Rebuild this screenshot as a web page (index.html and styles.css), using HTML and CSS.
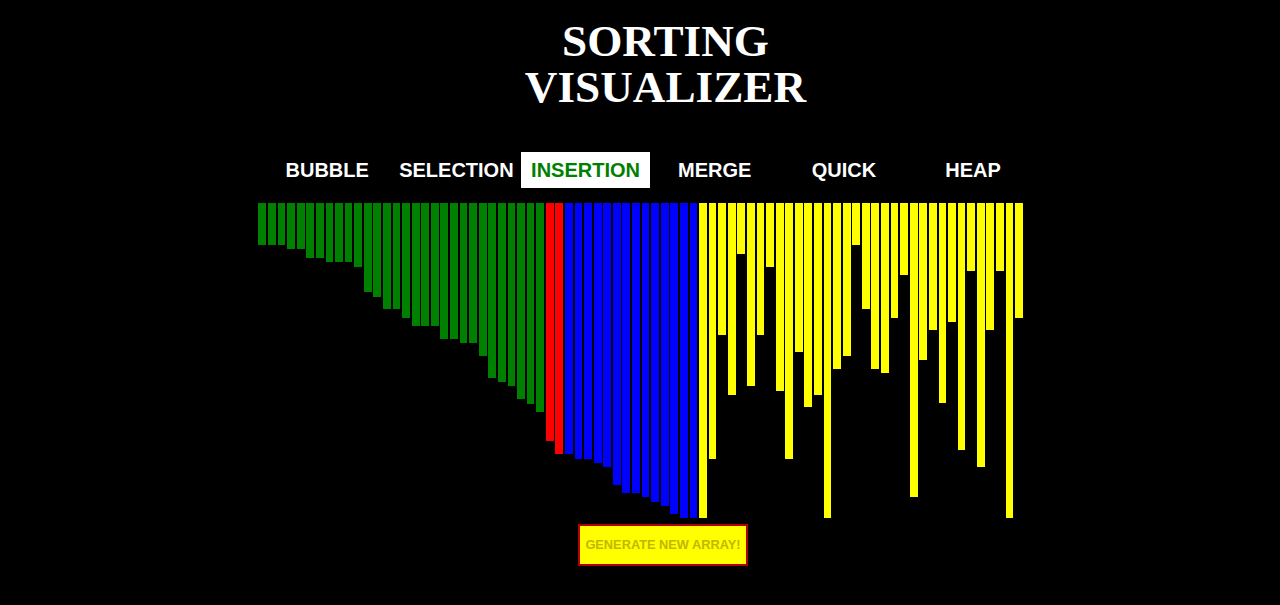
FILE: index.html
```html
<!DOCTYPE html>
<html lang="en">
<head>
<meta charset="utf-8">
<title>Sorting Visualizer</title>
<link rel="stylesheet" href="styles.css">
</head>
<body>
<div class="app">
  <h1 class="title">SORTING<br>VISUALIZER</h1>
  <nav class="algos">
    <div class="algo">BUBBLE</div>
    <div class="algo">SELECTION</div>
    <div class="algo active">INSERTION</div>
    <div class="algo">MERGE</div>
    <div class="algo">QUICK</div>
    <div class="algo">HEAP</div>
  </nav>
  <div class="bars">
    <div class="bar sorted" style="height:42px"></div>
    <div class="bar sorted" style="height:42px"></div>
    <div class="bar sorted" style="height:42px"></div>
    <div class="bar sorted" style="height:46px"></div>
    <div class="bar sorted" style="height:46px"></div>
    <div class="bar sorted" style="height:54.7px"></div>
    <div class="bar sorted" style="height:54.7px"></div>
    <div class="bar sorted" style="height:58.7px"></div>
    <div class="bar sorted" style="height:58.7px"></div>
    <div class="bar sorted" style="height:58.7px"></div>
    <div class="bar sorted" style="height:63.7px"></div>
    <div class="bar sorted" style="height:88.7px"></div>
    <div class="bar sorted" style="height:93.7px"></div>
    <div class="bar sorted" style="height:106.3px"></div>
    <div class="bar sorted" style="height:106.3px"></div>
    <div class="bar sorted" style="height:114.6px"></div>
    <div class="bar sorted" style="height:123px"></div>
    <div class="bar sorted" style="height:123px"></div>
    <div class="bar sorted" style="height:123px"></div>
    <div class="bar sorted" style="height:135.7px"></div>
    <div class="bar sorted" style="height:135.7px"></div>
    <div class="bar sorted" style="height:140px"></div>
    <div class="bar sorted" style="height:140px"></div>
    <div class="bar sorted" style="height:152.7px"></div>
    <div class="bar sorted" style="height:174.7px"></div>
    <div class="bar sorted" style="height:178.7px"></div>
    <div class="bar sorted" style="height:182.7px"></div>
    <div class="bar sorted" style="height:195.7px"></div>
    <div class="bar sorted" style="height:200.7px"></div>
    <div class="bar sorted" style="height:208.7px"></div>
    <div class="bar compare" style="height:238.3px"></div>
    <div class="bar compare" style="height:251px"></div>
    <div class="bar shifted" style="height:251px"></div>
    <div class="bar shifted" style="height:255.7px"></div>
    <div class="bar shifted" style="height:255.7px"></div>
    <div class="bar shifted" style="height:259.7px"></div>
    <div class="bar shifted" style="height:264px"></div>
    <div class="bar shifted" style="height:281.7px"></div>
    <div class="bar shifted" style="height:289.7px"></div>
    <div class="bar shifted" style="height:289.7px"></div>
    <div class="bar shifted" style="height:294.3px"></div>
    <div class="bar shifted" style="height:298.7px"></div>
    <div class="bar shifted" style="height:302.7px"></div>
    <div class="bar shifted" style="height:311.3px"></div>
    <div class="bar shifted" style="height:315.3px"></div>
    <div class="bar shifted" style="height:315.3px"></div>
    <div class="bar" style="height:315.3px"></div>
    <div class="bar" style="height:256px"></div>
    <div class="bar" style="height:132px"></div>
    <div class="bar" style="height:192px"></div>
    <div class="bar" style="height:51px"></div>
    <div class="bar" style="height:183px"></div>
    <div class="bar" style="height:132px"></div>
    <div class="bar" style="height:63.7px"></div>
    <div class="bar" style="height:187.7px"></div>
    <div class="bar" style="height:256px"></div>
    <div class="bar" style="height:148.7px"></div>
    <div class="bar" style="height:204.3px"></div>
    <div class="bar" style="height:192px"></div>
    <div class="bar" style="height:315.3px"></div>
    <div class="bar" style="height:165.7px"></div>
    <div class="bar" style="height:153px"></div>
    <div class="bar" style="height:42px"></div>
    <div class="bar" style="height:106.3px"></div>
    <div class="bar" style="height:165.7px"></div>
    <div class="bar" style="height:169.7px"></div>
    <div class="bar" style="height:114.7px"></div>
    <div class="bar" style="height:71.7px"></div>
    <div class="bar" style="height:293.7px"></div>
    <div class="bar" style="height:157px"></div>
    <div class="bar" style="height:127.3px"></div>
    <div class="bar" style="height:200.3px"></div>
    <div class="bar" style="height:119.3px"></div>
    <div class="bar" style="height:247px"></div>
    <div class="bar" style="height:68px"></div>
    <div class="bar" style="height:263.7px"></div>
    <div class="bar" style="height:127.3px"></div>
    <div class="bar" style="height:68px"></div>
    <div class="bar" style="height:315.3px"></div>
    <div class="bar" style="height:114.7px"></div>
  </div>
  <button class="generate">GENERATE NEW ARRAY!</button>
</div>
</body>
</html>
```

FILE: styles.css
```css
html, body {
  margin: 0;
  padding: 0;
  background: #000;
}

body {
  width: 1280px;
  height: 605px;
  overflow: hidden;
  font-family: "Liberation Sans", Arial, sans-serif;
}

.app {
  display: flex;
  flex-direction: column;
  align-items: flex-start;
}

.title {
  margin: 18.4px 0 0 0;
  padding-left: 51px;
  width: 1229px;
  text-align: center;
  font-family: "Liberation Serif", "Times New Roman", serif;
  font-weight: bold;
  font-size: 45.2px;
  line-height: 46px;
  color: #fff;
}

.algos {
  display: flex;
  margin: 41.9px 0 0 262.6px;
  height: 36px;
}

.algo {
  width: 129.2px;
  height: 36px;
  line-height: 36px;
  text-align: center;
  font-weight: bold;
  font-size: 20px;
  color: #fff;
}

.algo.active {
  background: #fff;
  color: #008000;
}

.bars {
  display: flex;
  flex-shrink: 0;
  align-items: flex-start;
  margin: 14.7px 0 0 257.6px;
  width: 768.4px;
  height: 315.3px;
}

.bar {
  flex: 0 0 7.8px;
  width: 7.8px;
  margin: 0 0.9px;
  background: #ffff00;
}

.bar.sorted {
  background: #008000;
}

.bar.compare {
  background: #ff0000;
}

.bar.shifted {
  background: #0000ff;
}

.generate {
  margin: 5.7px 0 0 578.3px;
  width: 169.4px;
  height: 42px;
  padding: 0;
  background: #ffff00;
  border: 2px solid #b00000;
  color: #c2b600;
  font-family: "Liberation Sans", Arial, sans-serif;
  font-weight: bold;
  font-size: 12.8px;
  text-align: center;
}
```
